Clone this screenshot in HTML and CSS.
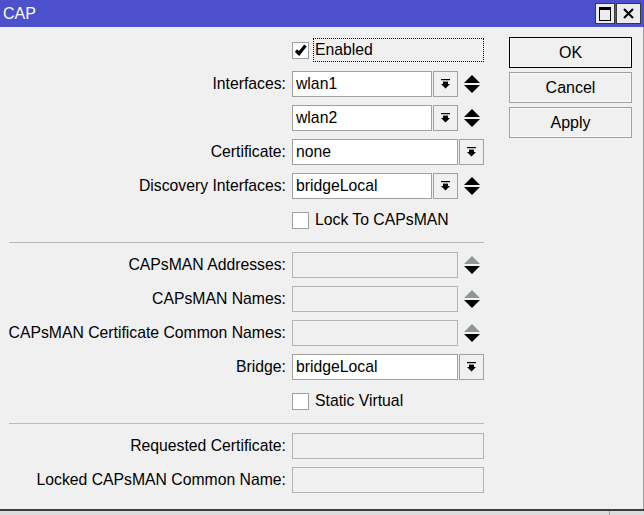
FILE: index.html
```html
<!DOCTYPE html>
<html lang="en">
<head>
    <meta charset="UTF-8">
    <title>CAP</title>
    <link rel="stylesheet" href="styles.css">
</head>
<body>
    <div class="window">
        <div class="titlebar">
            <span class="title">CAP</span>
            <div class="title-buttons">
                <span class="tbtn">
                    <svg width="12" height="14" viewBox="0 0 12 14"><rect x="0.5" y="0.5" width="11" height="13" fill="none" stroke="#000"/><rect x="0" y="0" width="12" height="3" fill="#000"/></svg>
                </span>
                <span class="tbtn close">
                    <svg width="11" height="11" viewBox="0 0 11 11"><path d="M1 1 L10 10 M10 1 L1 10" stroke="#000" stroke-width="2"/></svg>
                </span>
            </div>
        </div>

        <div class="content">
            <div class="form">
                <div class="row">
                    <span class="label"></span>
                    <span class="check checked">
                        <svg width="13" height="12" viewBox="0 0 13 12"><path d="M2 6.5 L5 9.5 L11.5 1.5" fill="none" stroke="#000" stroke-width="3.2"/></svg>
                    </span>
                    <span class="check-text focused">Enabled</span>
                </div>

                <div class="row">
                    <span class="label">Interfaces:</span>
                    <div class="field">
                        <span class="input">wlan1</span>
                        <span class="drop"><svg width="9" height="10" viewBox="0 0 9 10"><rect x="0" y="0" width="9" height="1.2"/><rect x="2" y="2.6" width="5" height="2.6"/><polygon points="0,5 9,5 4.5,9.6"/></svg></span>
                        <span class="updown"><svg width="16" height="18" viewBox="0 0 16 18"><polygon points="0,8 8,0 16,8"/><polygon points="0,10 16,10 8,18"/></svg></span>
                    </div>
                </div>

                <div class="row">
                    <span class="label"></span>
                    <div class="field">
                        <span class="input">wlan2</span>
                        <span class="drop"><svg width="9" height="10" viewBox="0 0 9 10"><rect x="0" y="0" width="9" height="1.2"/><rect x="2" y="2.6" width="5" height="2.6"/><polygon points="0,5 9,5 4.5,9.6"/></svg></span>
                        <span class="updown"><svg width="16" height="18" viewBox="0 0 16 18"><polygon points="0,8 8,0 16,8"/><polygon points="0,10 16,10 8,18"/></svg></span>
                    </div>
                </div>

                <div class="row">
                    <span class="label">Certificate:</span>
                    <div class="field">
                        <span class="input">none</span>
                        <span class="drop"><svg width="9" height="10" viewBox="0 0 9 10"><rect x="0" y="0" width="9" height="1.2"/><rect x="2" y="2.6" width="5" height="2.6"/><polygon points="0,5 9,5 4.5,9.6"/></svg></span>
                    </div>
                </div>

                <div class="row">
                    <span class="label">Discovery Interfaces:</span>
                    <div class="field">
                        <span class="input">bridgeLocal</span>
                        <span class="drop"><svg width="9" height="10" viewBox="0 0 9 10"><rect x="0" y="0" width="9" height="1.2"/><rect x="2" y="2.6" width="5" height="2.6"/><polygon points="0,5 9,5 4.5,9.6"/></svg></span>
                        <span class="updown"><svg width="16" height="18" viewBox="0 0 16 18"><polygon points="0,8 8,0 16,8"/><polygon points="0,10 16,10 8,18"/></svg></span>
                    </div>
                </div>

                <div class="row">
                    <span class="label"></span>
                    <span class="check"></span>
                    <span class="check-text">Lock To CAPsMAN</span>
                </div>

                <div class="separator"></div>

                <div class="row">
                    <span class="label">CAPsMAN Addresses:</span>
                    <div class="field">
                        <span class="input disabled"></span>
                        <span class="updown"><svg width="16" height="18" viewBox="0 0 16 18"><polygon points="0,8 8,0 16,8" fill="#8f988f"/><polygon points="0,10 16,10 8,18"/></svg></span>
                    </div>
                </div>

                <div class="row">
                    <span class="label">CAPsMAN Names:</span>
                    <div class="field">
                        <span class="input disabled"></span>
                        <span class="updown"><svg width="16" height="18" viewBox="0 0 16 18"><polygon points="0,8 8,0 16,8" fill="#8f988f"/><polygon points="0,10 16,10 8,18"/></svg></span>
                    </div>
                </div>

                <div class="row">
                    <span class="label">CAPsMAN Certificate Common Names:</span>
                    <div class="field">
                        <span class="input disabled"></span>
                        <span class="updown"><svg width="16" height="18" viewBox="0 0 16 18"><polygon points="0,8 8,0 16,8" fill="#8f988f"/><polygon points="0,10 16,10 8,18"/></svg></span>
                    </div>
                </div>

                <div class="row">
                    <span class="label">Bridge:</span>
                    <div class="field">
                        <span class="input">bridgeLocal</span>
                        <span class="drop"><svg width="9" height="10" viewBox="0 0 9 10"><rect x="0" y="0" width="9" height="1.2"/><rect x="2" y="2.6" width="5" height="2.6"/><polygon points="0,5 9,5 4.5,9.6"/></svg></span>
                    </div>
                </div>

                <div class="row">
                    <span class="label"></span>
                    <span class="check"></span>
                    <span class="check-text">Static Virtual</span>
                </div>

                <div class="separator"></div>

                <div class="row">
                    <span class="label">Requested Certificate:</span>
                    <div class="field">
                        <span class="input disabled"></span>
                    </div>
                </div>

                <div class="row">
                    <span class="label">Locked CAPsMAN Common Name:</span>
                    <div class="field">
                        <span class="input disabled"></span>
                    </div>
                </div>
            </div>

            <div class="actions">
                <button class="btn default">OK</button>
                <button class="btn">Cancel</button>
                <button class="btn">Apply</button>
            </div>
        </div>

        <div class="bottom">
            <span class="bottom-cell"></span>
        </div>
    </div>
</body>
</html>
```

FILE: styles.css
```css
/* base */
* {
    margin: 0;
    padding: 0;
    box-sizing: border-box;
}

body {
    background-color: #f0f0f0;
    font-family: 'Liberation Sans', Arial, sans-serif;
    font-size: 15.75px;
    color: #000;
    width: 644px;
    height: 515px;
    overflow: hidden;
}

.window {
    display: flex;
    flex-direction: column;
    height: 515px;
}

/* title bar */
.titlebar {
    height: 27px;
    background-color: #4c50cc;
    display: flex;
    align-items: center;
    justify-content: space-between;
    padding: 0 3px 0 3px;
}

.title {
    color: #fff;
    font-size: 16px;
}

.title-buttons {
    display: flex;
    gap: 1px;
    align-self: flex-start;
    margin-top: 3px;
}

.tbtn {
    width: 20px;
    height: 21px;
    background-color: #ececec;
    border: 1px solid #3a3a3a;
    display: flex;
    align-items: center;
    justify-content: center;
}

.tbtn.close {
    width: 25px;
}

/* main area */
.content {
    flex: 1;
    display: flex;
    padding-top: 10px;
    border-right: 1px solid #a0a0a0;
}

.form {
    width: 484px;
    display: flex;
    flex-direction: column;
    gap: 8px;
}

.row {
    display: flex;
    align-items: center;
    height: 26px;
}

.label {
    width: 292px;
    padding-right: 6px;
    text-align: right;
    white-space: nowrap;
    flex-shrink: 0;
}

.field {
    flex: 1;
    display: flex;
    align-items: center;
    height: 26px;
}

.input {
    flex: 1;
    height: 26px;
    background-color: #fff;
    border: 1px solid #a0a0a0;
    padding-left: 3px;
    line-height: 24px;
}

.input.disabled {
    background-color: #f0f0f0;
    border-color: #b4b4b4;
}

.drop {
    width: 25px;
    height: 26px;
    margin-left: 1px;
    border: 1px solid #a0a0a0;
    background-color: #f0f0f0;
    display: flex;
    align-items: center;
    justify-content: center;
}

.updown {
    width: 26px;
    height: 26px;
    padding-left: 6px;
    display: flex;
    align-items: center;
}

/* checkboxes */
.check {
    width: 17px;
    height: 17px;
    background-color: #fff;
    border: 1px solid #a0a0a0;
    display: flex;
    align-items: center;
    justify-content: center;
    flex-shrink: 0;
}

.check-text {
    margin-left: 4px;
    padding-left: 1px;
    height: 24px;
    line-height: 22px;
    border: 1px solid transparent;
}

.check-text.focused {
    flex: 1;
    border: 1px dotted #000;
}

.separator {
    height: 1px;
    background-color: #b9b9b9;
    margin: 1px 0 1px 9px;
}

/* buttons */
.actions {
    margin-left: 25px;
    display: flex;
    flex-direction: column;
    gap: 4px;
}

.btn {
    width: 123px;
    height: 31px;
    background-color: #f0f0f0;
    border: 1px solid #a0a0a0;
    box-shadow: inset 0 0 0 1px #f8f8f8;
    font-family: 'Liberation Sans', Arial, sans-serif;
    font-size: 16px;
    color: #000;
}

.btn.default {
    border-color: #000;
}

/* bottom edge */
.bottom {
    height: 6px;
    border-top: 2px solid #3c3c3c;
    background-color: #dcdcdc;
    position: relative;
}

.bottom-cell {
    position: absolute;
    left: 609px;
    top: 0;
    width: 1px;
    height: 4px;
    background-color: #a0a0a0;
}
```
